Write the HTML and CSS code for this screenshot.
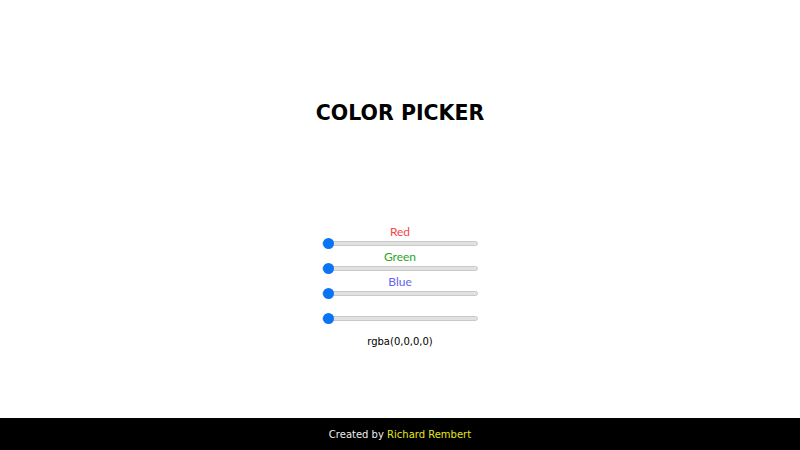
FILE: index.html
```html
<!DOCTYPE html>
<html>
<head>
<meta charset="utf-8">
<link rel="stylesheet" href="styles.css">
</head>
<body>
<main class="page">
  <h1 class="title">COLOR PICKER</h1>
  <div class="picker">
    <label class="lbl red">Red</label>
    <input class="range" type="range" min="0" max="255" value="0">
    <label class="lbl green">Green</label>
    <input class="range" type="range" min="0" max="255" value="0">
    <label class="lbl blue">Blue</label>
    <input class="range" type="range" min="0" max="255" value="0">
    <div class="spacer"></div>
    <input class="range" type="range" min="0" max="1" step="0.01" value="0">
    <p class="out">rgba(0,0,0,0)</p>
  </div>
</main>
<footer class="foot">Created by <span class="author">Richard Rembert</span></footer>
</body>
</html>
```
FILE: styles.css
```css
html, body { margin: 0; padding: 0; background: #fff; }
body { font-family: "DejaVu Sans", Verdana, sans-serif; }
.page {
  height: 418px;
  display: flex;
  flex-direction: column;
  align-items: center;
}
.title {
  margin: 100px 0 0;
  font-size: 20.5px;
  font-weight: bold;
  line-height: 26px;
  color: #000;
}
.picker {
  margin-top: 100px;
  display: flex;
  flex-direction: column;
  align-items: center;
}
.lbl {
  font-family: Lato, "Open Sans", sans-serif;
  font-size: 12px;
  line-height: 12px;
  display: block;
}
.red { color: #f2474d; }
.green { color: #2aa52a; }
.blue { color: #6464f0; }
.range {
  -webkit-appearance: none;
  appearance: none;
  width: 156px;
  height: 10px;
  margin: 0 0 3px;
  padding: 0;
  background: transparent;
}
.range::-webkit-slider-runnable-track {
  height: 5px;
  background: #e1e1e1;
  border: 1px solid #c9c9c9;
  border-radius: 3px;
  box-sizing: border-box;
}
.range::-webkit-slider-thumb {
  -webkit-appearance: none;
  width: 11px;
  height: 11px;
  border-radius: 50%;
  background: #0a74f4;
  border: none;
  margin-top: -4px;
}
.range:focus { outline: none; }
.spacer { height: 12px; }
.out {
  margin: 10px 0 0;
  font-size: 10px;
  line-height: 12px;
  color: #000;
}
.foot {
  height: 32px;
  background: #000;
  color: #eee;
  font-size: 10px;
  display: flex;
  align-items: center;
  justify-content: center;
  white-space: pre;
}
.author { color: #e6e61a; }
```
